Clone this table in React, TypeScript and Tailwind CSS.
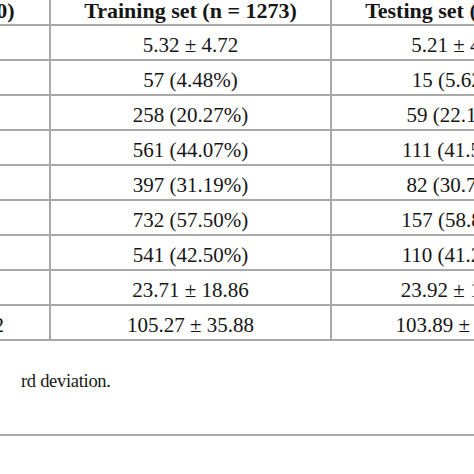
import React from "react";

const rows: [string, string, string][] = [
  ["5.30 ± 4.71", "5.32 ± 4.72", "5.21 ± 4.68"],
  ["72 (4.68%)", "57 (4.48%)", "15 (5.62%)"],
  ["317 (20.58%)", "258 (20.27%)", "59 (22.10%)"],
  ["672 (43.64%)", "561 (44.07%)", "111 (41.57%)"],
  ["479 (31.10%)", "397 (31.19%)", "82 (30.71%)"],
  ["889 (57.73%)", "732 (57.50%)", "157 (58.80%)"],
  ["651 (42.27%)", "541 (42.50%)", "110 (41.20%)"],
  ["23.75 ± 18.92", "23.71 ± 18.86", "23.92 ± 19.18"],
  ["105.03 ± 35.82", "105.27 ± 35.88", "103.89 ± 35.61"],
];

export default function App() {
  return (
    <div
      className="w-[474px] h-[474px] overflow-hidden bg-white text-[#161616]"
      style={{ fontFamily: '"Liberation Serif", "Times New Roman", serif' }}
    >
      <div className="ml-[-168px] mt-[-9px] w-[756px]">
        <div className="grid grid-cols-[219px_281px_254px] h-[35px] border-b-2 border-[#a9a9a9] text-[22px] font-bold">
          <div className="border-r-2 border-[#a9a9a9] text-center pt-[6px] leading-[27px]">Total (n = 1540)</div>
          <div className="border-r-2 border-[#a9a9a9] text-center pt-[6px] leading-[27px]">Training set (n = 1273)</div>
          <div className="text-center pt-[6px] leading-[27px]">Testing set (n = 267)</div>
        </div>
        {rows.map((r, i) => (
          <div
            key={i}
            className="grid grid-cols-[219px_281px_254px] h-[35px] border-b-2 border-[#a9a9a9] text-[21px]"
          >
            <div className="border-r-2 border-[#a9a9a9] text-center pt-[6px] leading-[27px] whitespace-nowrap">{r[0]}</div>
            <div className="border-r-2 border-[#a9a9a9] text-center pt-[6px] leading-[27px] whitespace-nowrap">{r[1]}</div>
            <div className="text-center pt-[6px] leading-[27px] whitespace-nowrap">{r[2]}</div>
          </div>
        ))}
      </div>
      <div className="pl-[21px] mt-[28px] h-[24px] leading-[24px] text-[18.5px] tracking-[-0.3px] whitespace-nowrap">
        rd deviation.
      </div>
      <div className="mt-[41px] border-t-2 border-[#a9a9a9] w-full" />
    </div>
  );
}
